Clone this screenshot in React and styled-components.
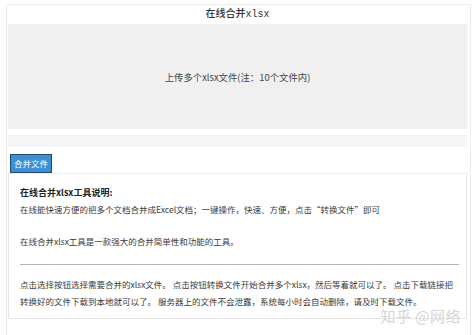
import React from 'react'
import styled, { createGlobalStyle } from 'styled-components'

const Global = createGlobalStyle`
  html, body {
    margin: 0;
    padding: 0;
    background: #fff;
  }
  body {
    font-family: "Noto Sans CJK SC", "Noto Sans", sans-serif;
    color: #333;
  }
`

const Frame = styled.div`
  position: relative;
  box-sizing: border-box;
  width: 465px;
  height: 331px;
  margin: 4px 0 0 6px;
  padding: 0 3px 0 1px;
  border: 1px solid #ececec;
  border-bottom: none;
`

const Title = styled.div`
  height: 19px;
  line-height: 19px;
  text-align: center;
  font-size: 10px;
  font-weight: 500;
  color: #333;
  font-family: "Liberation Mono", "Noto Sans CJK SC", monospace;
`

const Upload = styled.div`
  height: 105px;
  background: #f0f0f0;
  display: flex;
  align-items: center;
  justify-content: center;
  font-size: 9.4px;
  color: #444;
`

const Strip = styled.div`
  height: 11px;
  margin-top: 6px;
  background: #f6f6f6;
  border-top: 1px solid #f2f2f2;
`

const Button = styled.button`
  display: block;
  box-sizing: border-box;
  width: 42px;
  height: 19px;
  margin: 7px 0 0 2px;
  padding: 0;
  background: #3a8fd5;
  border: 1px solid #24496b;
  color: #fff;
  font-family: "Noto Sans CJK SC", sans-serif;
  font-size: 8.5px;
  line-height: 17px;
`

const Card = styled.div`
  box-sizing: border-box;
  width: 459px;
  padding: 10px 7px 8px 11px;
  border: 1px solid #e6e6e6;
  border-top-color: #eee;
  font-size: 8.5px;
  line-height: 17px;
  color: #3a3a3a;
`

const Heading = styled.div`
  font-size: 9px;
  font-weight: bold;
  color: #222;
`

const Line = styled.div`
  margin-top: ${(p) => p.$gap || 0}px;
`

const Rule = styled.hr`
  margin: 14px 0 11px;
  border: none;
  border-top: 1px solid #b4b4b4;
  height: 0;
`

const Watermark = styled.div`
  position: absolute;
  right: 9px;
  top: 300px;
  font-size: 15px;
  letter-spacing: 0.5px;
  color: #d6d6d6;
  font-family: "Noto Sans CJK SC", sans-serif;
`

export default function App() {
  return (
    <>
      <Global />
      <Frame>
        <Title>在线合并xlsx</Title>
        <Upload>上传多个xlsx文件(注：10个文件内)</Upload>
        <Strip />
        <Button>合并文件</Button>
        <Card>
          <Heading>在线合并xlsx工具说明:</Heading>
          <Line>在线能快速方便的把多个文档合并成Excel文档；一键操作，快速、方便，点击“转换文件”即可</Line>
          <Line $gap={15}>在线合并xlsx工具是一款强大的合并简单性和功能的工具。</Line>
          <Rule />
          <Line>
            点击选择按钮选择需要合并的xlsx文件。 点击按钮转换文件开始合并多个xlsx，然后等着就可以了。 点击下载链接把转换好的文件下载到本地就可以了。 服务器上的文件不会泄露，系统每小时会自动删除，请及时下载文件。
          </Line>
        </Card>
        <Watermark>知乎 @网络</Watermark>
      </Frame>
    </>
  )
}
